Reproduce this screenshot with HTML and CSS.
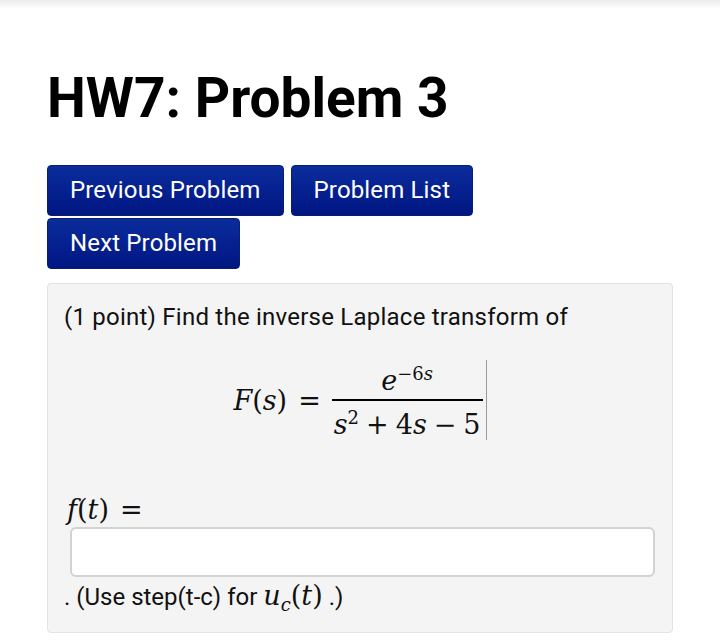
FILE: index.html
```html
<!DOCTYPE html>
<html lang="en">
<head>
    <meta charset="UTF-8">
    <meta name="viewport" content="width=device-width, initial-scale=1.0">
    <title>HW7: Problem 3</title>
    <link rel="stylesheet" href="styles.css">
</head>
<body>
    <div class="page">
        <h1>HW7: Problem 3</h1>

        <!-- problem navigation -->
        <div class="nav">
            <button class="nav-btn">Previous Problem</button>
            <button class="nav-btn">Problem List</button>
            <button class="nav-btn">Next Problem</button>
        </div>

        <div class="problem">
            <p class="statement">(1 point) Find the inverse Laplace transform of</p>

            <div class="display">
                <span class="math">
                    <i>F</i>(<i>s</i>)<span class="rel">=</span>
                </span>
                <span class="frac">
                    <span class="num math"><i>e</i><sup>−6<i>s</i></sup></span>
                    <span class="den math"><i>s</i><sup>2</sup><span class="bin">+</span>4<i>s</i><span class="bin">−</span>5</span>
                </span>
                <span class="caret"></span>
            </div>

            <div class="answer-label math"><i>f</i>(<i>t</i>)<span class="rel">=</span></div>
            <input type="text" class="answer">
            <div class="hint">. (Use step(t-c) for <span class="math"><i>u</i><sub><i>c</i></sub>(<i>t</i>)</span> .)</div>
        </div>
    </div>
</body>
</html>
```

FILE: styles.css
```css
body {
    margin: 0;
    font-family: Roboto, "Liberation Sans", sans-serif;
    color: #111;
    background: linear-gradient(#ececec, #fff 9px) no-repeat;
}
.page {
    padding: 0 47px;
}
h1 {
    font-size: 55px;
    font-weight: 700;
    line-height: 66px;
    margin: 0;
    padding-top: 65px;
    color: #000;
}
.nav {
    display: flex;
    flex-wrap: wrap;
    gap: 2px 7px;
    width: 440px;
    margin-top: 34px;
}
.nav-btn {
    font-family: Roboto, "Liberation Sans", sans-serif;
    font-size: 24px;
    line-height: 27px;
    letter-spacing: 0.15px;
    padding: 11px 22px;
    color: #fff;
    border: 1px solid #0a1e70;
    border-radius: 4px;
    background: linear-gradient(#0b2c9c, #001682);
    cursor: pointer;
}
.problem {
    margin-top: 14px;
    padding: 20px 16px 0;
    box-sizing: border-box;
    background-color: #f4f4f4;
    border: 1px solid #e3e3e3;
    border-radius: 4px;
    height: 350px;
}
.statement {
    margin: 0;
    font-size: 24px;
    line-height: 27px;
    letter-spacing: 0.23px;
}
.math {
    font-family: "DejaVu Serif", serif;
    font-size: 27px;
}
.math i {
    font-style: italic;
}
.rel {
    margin: 0 11px;
}
.bin {
    margin: 0 7px;
}
.math sup, .math sub {
    font-size: 18px;
}
.display {
    display: flex;
    align-items: center;
    justify-content: center;
    margin-top: 28px;
    height: 82px;
}
.frac {
    display: inline-flex;
    flex-direction: column;
    align-items: center;
}
.num {
    padding: 0 2px 3px;
    line-height: 30px;
    border-bottom: 2px solid #000;
    align-self: stretch;
    text-align: center;
}
.den {
    line-height: 34px;
    padding: 0 2px;
}
.caret {
    width: 1px;
    height: 80px;
    margin-left: 3px;
    background-color: #999;
}
.answer-label {
    margin-top: 52px;
    line-height: 34px;
    padding-left: 3px;
}
.answer {
    display: block;
    margin-left: 6px;
    width: 585px;
    height: 50px;
    box-sizing: border-box;
    background-color: #fff;
    border: 2px solid #d2d2d2;
    border-radius: 6px;
}
.hint {
    font-size: 24px;
    line-height: 34px;
    margin-top: 2px;
}
```
